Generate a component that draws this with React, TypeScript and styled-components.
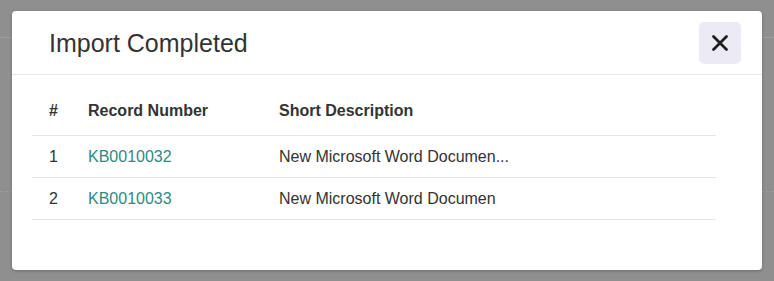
import React from 'react';
import styled, { createGlobalStyle } from 'styled-components';

const GlobalStyle = createGlobalStyle`
  html, body {
    margin: 0;
    padding: 0;
    background: #8f8f8f;
    font-family: Arial, "Liberation Sans", sans-serif;
  }
`;

const Backdrop = styled.div`
  position: relative;
  width: 774px;
  height: 281px;
  overflow: hidden;
  background: #8f8f8f;
  padding: 11px 12px 0 12px;
  box-sizing: border-box;
`;

const BackLine = styled.div<{ top: number; dashed?: boolean }>`
  position: absolute;
  left: 0;
  right: 0;
  top: ${(p) => p.top}px;
  border-top: 1px ${(p) => (p.dashed ? 'dashed' : 'solid')} #9c9c9c;
`;

const Modal = styled.div`
  position: relative;
  width: 750px;
  height: 259px;
  background: #fff;
  border-radius: 4px;
  box-shadow: 0 1px 3px rgba(0, 0, 0, 0.25);
  display: flex;
  flex-direction: column;
`;

const Header = styled.div`
  height: 63px;
  display: flex;
  align-items: center;
  justify-content: space-between;
  padding: 0 21px 0 37px;
  border-bottom: 1px solid #e5e5e5;
`;

const Title = styled.h4`
  margin: 0;
  font-size: 25px;
  font-weight: 400;
  color: #333;
  padding-top: 1px;
`;

const CloseButton = styled.button`
  width: 42px;
  height: 42px;
  border: none;
  border-radius: 5px;
  background: #ecebf5;
  display: flex;
  align-items: center;
  justify-content: center;
  padding: 0;
  cursor: pointer;
`;

const Body = styled.div`
  padding: 11px 46px 0 20px;
`;

const Row = styled.div<{ head?: boolean }>`
  display: grid;
  grid-template-columns: 39px 191px 1fr;
  align-items: center;
  height: ${(p) => (p.head ? 49 : 41)}px;
  padding-left: 17px;
  border-bottom: 1px solid #e5e5e5;
  font-size: 16px;
  font-weight: ${(p) => (p.head ? 700 : 400)};
  color: #333;
`;

const RecordLink = styled.a`
  color: #2f8a80;
  text-decoration: none;
`;

const rows = [
  { n: 1, number: 'KB0010032', descr: 'New Microsoft Word Documen...' },
  { n: 2, number: 'KB0010033', descr: 'New Microsoft Word Documen' },
];

export default function App() {
  return (
    <Backdrop>
      <GlobalStyle />
      <BackLine top={37} />
      <BackLine top={191} dashed />
      <Modal>
        <Header>
          <Title>Import Completed</Title>
          <CloseButton aria-label="Close">
            <svg width="18" height="18" viewBox="0 0 18 18">
              <path d="M2.5 2.5L15.5 15.5M15.5 2.5L2.5 15.5" stroke="#1f1f1f" strokeWidth="2.8" strokeLinecap="round" />
            </svg>
          </CloseButton>
        </Header>
        <Body>
          <Row head>
            <span>#</span>
            <span>Record Number</span>
            <span>Short Description</span>
          </Row>
          {rows.map((r) => (
            <Row key={r.n}>
              <span>{r.n}</span>
              <RecordLink href="#">{r.number}</RecordLink>
              <span>{r.descr}</span>
            </Row>
          ))}
        </Body>
      </Modal>
    </Backdrop>
  );
}
